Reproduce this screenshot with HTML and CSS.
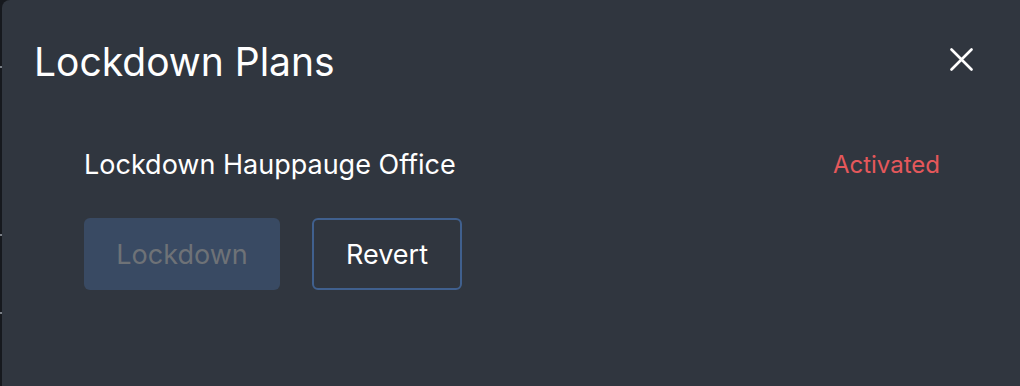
FILE: index.html
```html
<!DOCTYPE html>
<html lang="en">
<head>
  <meta charset="UTF-8">
  <meta name="viewport" content="width=device-width, initial-scale=1.0">
  <title>Lockdown Plans</title>
  <link rel="stylesheet" href="styles.css">
</head>
<body>

  <div class="backdrop">
    <span class="tick tick-1"></span>
    <span class="tick tick-2"></span>
    <span class="tick tick-3"></span>
  </div>

  <!-- Lockdown dialog -->
  <div class="modal">
    <div class="modal-header">
      <h2>Lockdown Plans</h2>
      <button class="close-btn" aria-label="Close">
        <svg width="23" height="23" viewBox="0 0 23 23">
          <path d="M1.5 1.5 L21.5 21.5 M21.5 1.5 L1.5 21.5" stroke="#fff" stroke-width="2.6" stroke-linecap="round"/>
        </svg>
      </button>
    </div>

    <div class="modal-body">
      <div class="plan-row">
        <span class="plan-name">Lockdown Hauppauge Office</span>
        <span class="plan-status">Activated</span>
      </div>
      <div class="plan-actions">
        <button class="btn btn-primary" disabled>Lockdown</button>
        <button class="btn btn-outline">Revert</button>
      </div>
    </div>
  </div>

</body>
</html>
```

FILE: styles.css
```css
body {
  margin: 0;
  padding: 0;
  width: 1020px;
  height: 386px;
  overflow: hidden;
  background-color: #16191e;
  font-family: 'Inter', sans-serif;
  display: flex;
}

/* Thin strip of page visible behind the dialog */
.backdrop {
  width: 2px;
  flex-shrink: 0;
  position: relative;
}

.tick {
  position: absolute;
  left: 0;
  width: 2px;
  height: 2px;
  background-color: #7a7f86;
}

.tick-1 { top: 66px; }
.tick-2 { top: 234px; }
.tick-3 { top: 312px; }

/* Dialog */
.modal {
  flex: 1;
  background-color: #30363f;
  border-top-left-radius: 8px;
  color: #fff;
}

.modal-header {
  display: flex;
  justify-content: space-between;
  align-items: flex-start;
  padding: 38px 47px 0 32px;
}

.modal-header h2 {
  margin: 0;
  font-size: 39px;
  line-height: 48px;
  font-weight: 400;
}

.close-btn {
  background: none;
  border: none;
  padding: 0;
  margin-top: 10px;
  width: 23px;
  height: 23px;
  cursor: pointer;
}

.close-btn svg {
  display: block;
}

.modal-body {
  padding: 62px 80px 0 82px;
}

.plan-row {
  display: flex;
  justify-content: space-between;
  align-items: center;
  font-size: 27px;
  line-height: 33px;
}

.plan-status {
  color: #e5585b;
  font-size: 24px;
  line-height: 29px;
}

.plan-actions {
  display: flex;
  gap: 32px;
  margin-top: 37px;
}

.btn {
  height: 72px;
  border-radius: 6px;
  font-family: inherit;
  font-size: 27px;
  padding: 0;
}

.btn-primary {
  width: 196px;
  background-color: #394a63;
  border: none;
  color: #6e7277;
}

.btn-outline {
  width: 150px;
  background-color: transparent;
  border: 2px solid #40608e;
  color: #fff;
}
```
